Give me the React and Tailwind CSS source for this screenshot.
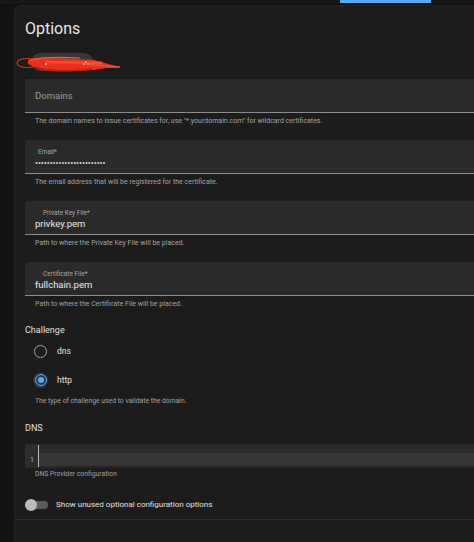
import React from "react";

function Field({ label, value, floating, password, helper }) {
  return (
    <div className="flex flex-col">
      <div className="h-[34px] bg-[#2a2a2a] border-b border-[#8c8c8c] rounded-t-[3px] flex flex-col">
        {floating ? (
          <div className="flex flex-col pl-[10px] pt-[8px]">
            <span className={`${password ? "pl-[3px]" : "pl-[8px]"} text-[6.5px] leading-[8px] text-[#a8a8a8]`}>{label}</span>
            <span className={password ? "pt-[1px] text-[9px] leading-[12px] text-[#d8d8d8] tracking-[-0.1px]" : "pt-[1px] text-[9.5px] leading-[12px] text-[#ececec]"}>{value}</span>
          </div>
        ) : (
          <span className="pl-[10px] pt-[11px] text-[9.5px] leading-[12px] text-[#9b9b9b]">{label}</span>
        )}
      </div>
      <p className="pl-[10px] pt-[3px] text-[7px] leading-[11px] text-[#a3a3a3]">{helper}</p>
    </div>
  );
}

export default function App() {
  return (
    <div className="w-[474px] h-[542px] overflow-hidden bg-[#121212] relative" style={{ fontFamily: "Roboto, 'Noto Sans', sans-serif" }}>
      <div className="h-[5px] bg-[#171717] border-b border-[#0d0d0d] relative">
        <div className="absolute left-[340px] top-0 w-[91px] h-[3px] bg-[#58a9f2]" />
      </div>
      <div className="ml-[14px] w-[520px] h-[540px] bg-[#1c1c1c] rounded-tl-[8px] border-l border-t border-[#252525] flex flex-col">
        <h1 className="pl-[10px] pt-[13px] h-[43px] text-[16px] leading-[20px] text-[#e6e6e6]">Options</h1>
        <div className="relative h-[30px] pl-[16px]">
          <div className="mt-[4px] w-[62px] h-[18px] rounded-full bg-[#383838]" />
          <svg className="absolute left-[1px] top-[6px]" width="106" height="20" viewBox="0 0 106 20">
            <ellipse cx="11" cy="8" rx="10" ry="4.5" stroke="#e8301e" strokeWidth="1.2" fill="none" />
            <path d="M12 5 C20 3 40 3 60 4 L78 5 C86 7 92 9 100 11 L104 13 L90 13 L78 15 L60 16 L40 15 C28 14 16 12 12 9 Z" fill="#e8301e" />
            <path d="M14 5 C24 2 44 2 64 3" stroke="#ff5a3a" strokeWidth="1.2" fill="none" />
            <path d="M20 13 C32 16 50 17 76 14" stroke="#c41f12" strokeWidth="1.4" fill="none" />
            <path d="M66 9 L104 12" stroke="#f04a30" strokeWidth="1.6" />
            <path d="M30 7 L86 8" stroke="#ff4a2e" strokeWidth="2.5" />
            <circle cx="30" cy="9" r="0.9" fill="#f8c8b8" />
            <circle cx="70" cy="7" r="1" fill="#f8c8b8" />
            <circle cx="68" cy="9" r="0.8" fill="#f8c8b8" />
            <circle cx="72" cy="9" r="0.7" fill="#f8c8b8" />
          </svg>
        </div>
        <div className="pl-[10px] flex flex-col gap-[13px]">
          <Field label="Domains" helper={'The domain names to issue certificates for, use "*.yourdomain.com" for wildcard certificates.'} />
          <Field label="Email*" floating password value="••••••••••••••••••••••••" helper="The email address that will be registered for the certificate." />
          <Field label="Private Key File*" floating value="privkey.pem" helper="Path to where the Private Key File will be placed." />
          <Field label="Certificate File*" floating value="fullchain.pem" helper="Path to where the Certificate File will be placed." />
        </div>
        <div className="pl-[10px] pt-[13px]">
          <div className="text-[9px] leading-[14px] text-[#e0e0e0]">Challenge</div>
          <div className="flex items-center h-[28px] pl-[9px] gap-[10px]">
            <span className="w-[13px] h-[13px] rounded-full border-[1.5px] border-[#a0a0a0]" />
            <span className="text-[8.5px] text-[#e0e0e0]">dns</span>
          </div>
          <div className="flex items-center h-[30px] pl-[8px] gap-[9px]">
            <span className="w-[15px] h-[15px] rounded-full bg-[#2a3a4a] flex items-center justify-center">
              <span className="w-[12px] h-[12px] rounded-full border-[1.5px] border-[#5aaaf2] flex items-center justify-center">
                <span className="w-[6px] h-[6px] rounded-full bg-[#5aaaf2]" />
              </span>
            </span>
            <span className="text-[8.5px] text-[#e0e0e0]">http</span>
          </div>
          <p className="pl-[10px] text-[6.8px] leading-[12px] text-[#a3a3a3]">The type of challenge used to validate the domain.</p>
          <div className="pt-[14px] text-[9px] leading-[14px] text-[#e0e0e0]">DNS</div>
          <div className="mt-[9px] h-[24px] flex bg-[#262626]">
            <div className="w-[13px] bg-[#2c2c2c] flex items-end justify-end pr-[4px] pb-[4px]">
              <span className="text-[7px] leading-[8px] text-[#b5b5b5]">1</span>
            </div>
            <div className="w-[1px] bg-[#bdbdbd] my-[1px]" />
            <div className="flex-1 flex flex-col">
              <div className="h-[9px] bg-[#2a2a2a]" />
              <div className="h-[13px] bg-[#363636]" />
            </div>
          </div>
          <p className="pl-[10px] pt-[1px] text-[6.8px] leading-[10px] text-[#a3a3a3]">DNS Provider configuration</p>
          <div className="flex items-center pt-[20px] gap-[8px]">
            <div className="relative w-[23px] h-[12px] flex items-center">
              <div className="ml-[3px] w-[20px] h-[8px] rounded-full bg-[#5b5b5b]" />
              <div className="absolute left-0 top-0 w-[12px] h-[12px] rounded-full bg-[#bcbcbc]" />
            </div>
            <span className="text-[8px] text-[#e0e0e0]">Show unused optional configuration options</span>
          </div>
        </div>
        <div className="mt-[8px] h-[1px] bg-[#2c2c2c]" />
      </div>
    </div>
  );
}
